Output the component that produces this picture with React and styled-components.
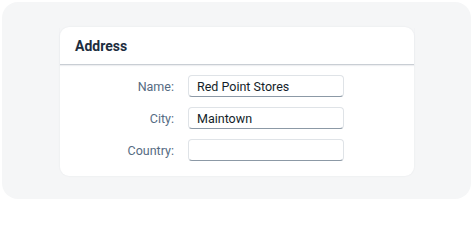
import React from "react";
import styled, { createGlobalStyle } from "styled-components";

const GlobalStyle = createGlobalStyle`
  body {
    margin: 0;
    background: #ffffff;
    font-family: Roboto, "Liberation Sans", Arial, sans-serif;
  }
`;

const Stage = styled.div`
  box-sizing: border-box;
  margin: 2px 0 0 2px;
  width: 469px;
  height: 197px;
  padding: 25px 0 0 58px;
  background: #f5f6f7;
  border-radius: 16px;
`;

const Card = styled.section`
  box-sizing: border-box;
  width: 354px;
  height: 149px;
  background: #ffffff;
  border-radius: 9px;
  box-shadow: 0 0 2px rgba(34, 53, 72, 0.08);
`;

const Header = styled.header`
  box-sizing: border-box;
  height: 38px;
  padding: 0 15px;
  display: flex;
  align-items: center;
  border-bottom: 1px solid #c9ced4;
  box-shadow: 0 1px 1px rgba(34, 53, 72, 0.08);
`;

const Title = styled.h2`
  margin: 0;
  font-size: 14px;
  font-weight: 700;
  color: #1d2d3e;
`;

const Form = styled.div`
  display: grid;
  grid-template-columns: 114px 156px;
  column-gap: 14px;
  row-gap: 10px;
  padding-top: 10px;
  align-items: center;
`;

const Label = styled.label`
  text-align: right;
  font-size: 12.5px;
  color: #556b82;
`;

const Field = styled.input`
  box-sizing: border-box;
  height: 22px;
  width: 100%;
  margin: 0;
  padding: 0 8px;
  border: 1px solid #dfe3e7;
  border-bottom-color: #8c99a6;
  border-radius: 4px;
  background: #ffffff;
  font-family: inherit;
  font-size: 12.5px;
  color: #131e29;
  outline: none;
`;

const fields = [
  { label: "Name:", value: "Red Point Stores" },
  { label: "City:", value: "Maintown" },
  { label: "Country:", value: "" },
];

export default function App() {
  return (
    <>
      <GlobalStyle />
      <Stage>
        <Card>
          <Header>
            <Title>Address</Title>
          </Header>
          <Form>
            {fields.map((f) => (
              <React.Fragment key={f.label}>
                <Label>{f.label}</Label>
                <Field defaultValue={f.value} />
              </React.Fragment>
            ))}
          </Form>
        </Card>
      </Stage>
    </>
  );
}
